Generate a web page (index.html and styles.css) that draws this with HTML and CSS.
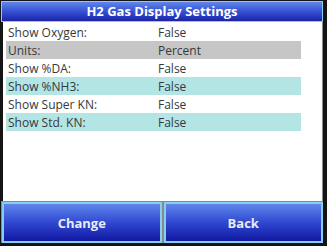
FILE: index.html
```html
<!DOCTYPE html>
<html>
<head>
<meta charset="utf-8">
<link rel="stylesheet" href="styles.css">
</head>
<body>
<div class="screen">
  <div class="title">H2 Gas Display Settings</div>
  <div class="content">
    <div class="row"><span class="label">Show Oxygen:</span><span class="value">False</span></div>
    <div class="row gray"><span class="label">Units:</span><span class="value">Percent</span></div>
    <div class="row"><span class="label">Show %DA:</span><span class="value">False</span></div>
    <div class="row teal"><span class="label">Show %NH3:</span><span class="value">False</span></div>
    <div class="row"><span class="label">Show Super KN:</span><span class="value">False</span></div>
    <div class="row teal"><span class="label">Show Std. KN:</span><span class="value">False</span></div>
  </div>
  <div class="buttons">
    <div class="btn">Change</div>
    <div class="btn">Back</div>
  </div>
</div>
</body>
</html>
```

FILE: styles.css
```css
html, body {
  margin: 0;
  padding: 0;
  background: #141414;
}
.screen {
  width: 327px;
  height: 246px;
  box-sizing: border-box;
  padding: 1px 4px 3px 1px;
  display: flex;
  flex-direction: column;
  font-family: "Open Sans", "DejaVu Sans", sans-serif;
}
.title {
  height: 21px;
  box-sizing: border-box;
  border: 1px solid #86cdf0;
  border-bottom-width: 1px;
  background: linear-gradient(#5f86ea, #3a55d6 45%, #1a24a8);
  color: #ffffff;
  font-weight: bold;
  font-size: 13px;
  line-height: 19px;
  text-align: center;
}
.content {
  flex: 1;
  background: #ffffff;
  margin-left: 2px;
  border-right: 1px solid #8a8a8a;
  padding: 1px 21px 0 3px;
  display: flex;
  flex-direction: column;
}
.row {
  height: 18px;
  display: flex;
  align-items: center;
  font-size: 12px;
  color: #383838;
}
.row.gray { background: #c6c6c6; }
.row.teal { background: #b3e5e5; }
.label {
  width: 150px;
  padding-left: 2px;
}
.value {
  flex: 1;
}
.buttons {
  height: 42px;
  display: flex;
  gap: 2px;
  background: #8a8a8a;
  padding: 1px 0 0 1px;
  box-sizing: border-box;
}
.btn {
  flex: 1;
  box-sizing: border-box;
  border: 2px solid #86cdf0;
  background: linear-gradient(#5f86ea, #3048d2 50%, #1018a0);
  color: #e8ecf8;
  font-weight: bold;
  font-size: 13px;
  display: flex;
  align-items: center;
  justify-content: center;
}
```
